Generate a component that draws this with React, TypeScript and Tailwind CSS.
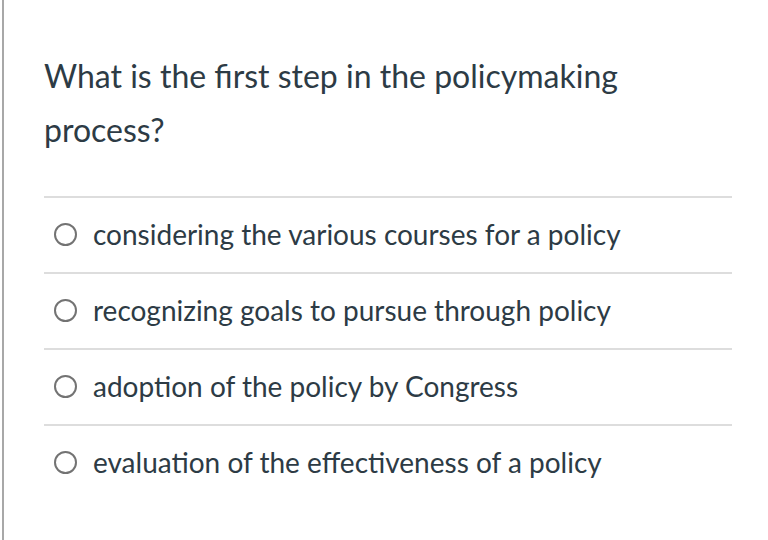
const options = [
  'considering the various courses for a policy',
  'recognizing goals to pursue through policy',
  'adoption of the policy by Congress',
  'evaluation of the effectiveness of a policy',
]

export default function App() {
  return (
    <div className="h-[540px] w-[768px] overflow-hidden bg-white pl-[2px]" style={{ fontFamily: 'Lato, "Open Sans", sans-serif' }}>
      <div className="h-full border-l-2 border-[#a8a8a8] pl-[40px] pt-[49px]">
        <div className="w-[688px]">
          <p className="w-[660px] text-[32px] leading-[54px] text-[#2d3b45]">
            What is the first step in the policymaking process?
          </p>
          <div className="mt-[39px]">
            {options.map((o) => (
              <div key={o}>
                <div className="h-[2px] bg-[#dddddd]" />
                <label className="flex h-[74px] items-center pb-[2px]">
                  <span className="ml-[10px] h-[23px] w-[23px] rounded-full border-2 border-[#737373]" />
                  <span className="ml-[16px] text-[28px] text-[#2d3b45]">{o}</span>
                </label>
              </div>
            ))}
          </div>
        </div>
      </div>
    </div>
  )
}
